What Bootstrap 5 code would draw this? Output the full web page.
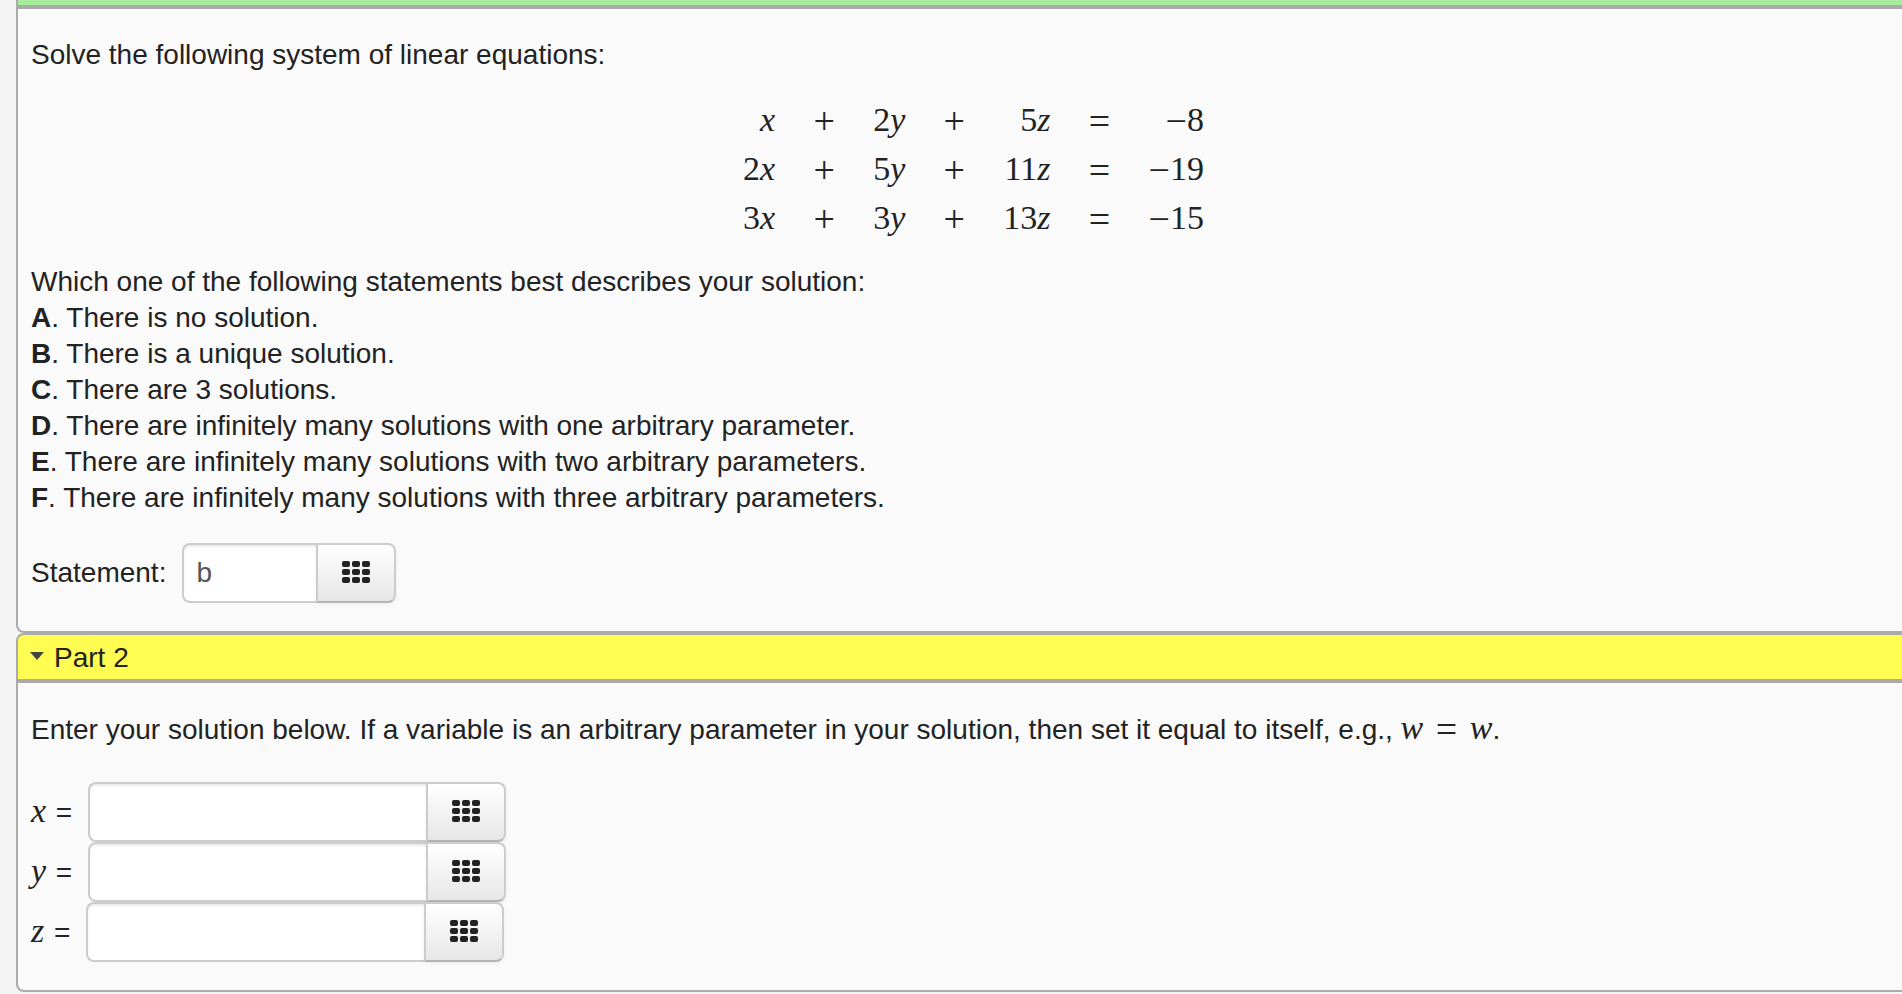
<!DOCTYPE html>
<html lang="en">
<head>
<meta charset="utf-8">
<meta name="viewport" content="width=device-width, initial-scale=1">
<title>Linear systems</title>
<link rel="stylesheet" href="https://cdn.jsdelivr.net/npm/bootstrap@5.3.0/dist/css/bootstrap.min.css">
<style>
  body { background: #f4f4f4; color: #222; font: 28px/36px "Liberation Sans", Arial, sans-serif; }
  .part { margin-left: 16px; }
  .part-head { border: 2px solid #aaa; border-right: 0; border-radius: 8px 0 0 0; }
  .part-head button { color: #222; line-height: 42px; padding: 2px 0 0 12px; gap: 10px; }
  .part-done { background: #a5ec9b; height: 7px; border-top: 0; border-radius: 0; }
  .part-open { background: #fffc52; }
  .part-body { background: #fafafa; border: 2px solid #aaa; border-right: 0; border-radius: 0 0 0 8px; padding: 28px 0 28px 13px; }
  .arrow { width: 14px; height: 8px; margin-top: -5px; }
  .system { font: 34px/49px "Liberation Serif", "Times New Roman", serif; margin: 22px auto; text-align: right; }
  .system-wrap { padding-left: 14px; }
  .system td { padding: 0; }
  .system .op { width: 98px; text-align: center; }
  .op span, .sign, .rel { font-size: 38px; line-height: 34px; vertical-align: -3px; }
  .math { font: italic 34px/34px "Liberation Serif", "Times New Roman", serif; }
  .rel { font-style: normal; margin: 0 4px; }
  label .math { margin-right: 2px; }
  .answers { margin-top: 34px; }
  .statement-row { margin-top: 27px; }
  .answer { width: 418px; height: 60px; }
  .answer-short { width: 214px; }
  .answer .form-control { font-size: 28px; color: #555; padding: 0 12px; border: 2px solid #ccc; border-right: 0; border-radius: 8px; box-shadow: inset 0 2px 2px rgba(0,0,0,.075); }
  .pad-btn { width: 80px; border: 2px solid #ccc; border-bottom-color: #b3b3b3; border-radius: 8px; background: linear-gradient(#fff, #e6e6e6); box-shadow: 0 2px 4px rgba(0,0,0,.05); padding: 0 0 2px; }
  .pad-btn svg { width: 28px; height: 22px; fill: #222; display: block; margin: auto; }
</style>
</head>
<body>
<svg class="d-none" aria-hidden="true">
  <symbol id="keys" viewBox="0 0 28 22">
    <rect width="8" height="6" rx="2"/><rect x="10" width="8" height="6" rx="2"/><rect x="20" width="8" height="6" rx="2"/>
    <rect y="8" width="8" height="6" rx="2"/><rect x="10" y="8" width="8" height="6" rx="2"/><rect x="20" y="8" width="8" height="6" rx="2"/>
    <rect y="16" width="8" height="6" rx="2"/><rect x="10" y="16" width="8" height="6" rx="2"/><rect x="20" y="16" width="8" height="6" rx="2"/>
  </symbol>
</svg>
<main>
  <section class="part">
    <div class="part-head part-done"></div>
    <div class="part-body">
      <p class="m-0">Solve the following system of linear equations:</p>
      <div class="system-wrap">
        <table class="system">
          <tr><td><i>x</i></td><td class="op"><span>+</span></td><td>2<i>y</i></td><td class="op"><span>+</span></td><td>5<i>z</i></td><td class="op"><span>=</span></td><td><span class="sign">−</span>8</td></tr>
          <tr><td>2<i>x</i></td><td class="op"><span>+</span></td><td>5<i>y</i></td><td class="op"><span>+</span></td><td>11<i>z</i></td><td class="op"><span>=</span></td><td><span class="sign">−</span>19</td></tr>
          <tr><td>3<i>x</i></td><td class="op"><span>+</span></td><td>3<i>y</i></td><td class="op"><span>+</span></td><td>13<i>z</i></td><td class="op"><span>=</span></td><td><span class="sign">−</span>15</td></tr>
        </table>
      </div>
      <p class="m-0">Which one of the following statements best describes your solution:</p>
      <ul class="list-unstyled m-0">
        <li><b>A</b>. There is no solution.</li>
        <li><b>B</b>. There is a unique solution.</li>
        <li><b>C</b>. There are 3 solutions.</li>
        <li><b>D</b>. There are infinitely many solutions with one arbitrary parameter.</li>
        <li><b>E</b>. There are infinitely many solutions with two arbitrary parameters.</li>
        <li><b>F</b>. There are infinitely many solutions with three arbitrary parameters.</li>
      </ul>
      <div class="statement-row d-flex align-items-center gap-3">
        <label for="statement">Statement:</label>
        <div class="input-group answer answer-short">
          <input id="statement" type="text" class="form-control" value="b">
          <button type="button" class="btn pad-btn" aria-label="Open keypad"><svg><use href="#keys"/></svg></button>
        </div>
      </div>
    </div>
  </section>
  <section class="part">
    <div class="part-head part-open">
      <button type="button" class="d-flex align-items-center w-100 border-0 bg-transparent">
        <svg class="arrow" viewBox="0 0 14 8"><path d="M0 0h14L7 8z" fill="#444"/></svg>Part 2
      </button>
    </div>
    <div class="part-body">
      <p class="m-0">Enter your solution below. If a variable is an arbitrary parameter in your solution, then set it equal to itself, e.g., <span class="math">w <span class="rel">=</span> w</span>.</p>
      <div class="answers">
        <div class="d-flex align-items-center gap-3">
          <label for="ans-x"><span class="math">x</span> =</label>
          <div class="input-group answer">
            <input id="ans-x" type="text" class="form-control">
            <button type="button" class="btn pad-btn" aria-label="Open keypad"><svg><use href="#keys"/></svg></button>
          </div>
        </div>
        <div class="d-flex align-items-center gap-3">
          <label for="ans-y"><span class="math">y</span> =</label>
          <div class="input-group answer">
            <input id="ans-y" type="text" class="form-control">
            <button type="button" class="btn pad-btn" aria-label="Open keypad"><svg><use href="#keys"/></svg></button>
          </div>
        </div>
        <div class="d-flex align-items-center gap-3">
          <label for="ans-z"><span class="math">z</span> =</label>
          <div class="input-group answer">
            <input id="ans-z" type="text" class="form-control">
            <button type="button" class="btn pad-btn" aria-label="Open keypad"><svg><use href="#keys"/></svg></button>
          </div>
        </div>
      </div>
    </div>
  </section>
</main>
<script src="https://cdn.jsdelivr.net/npm/bootstrap@5.3.0/dist/js/bootstrap.bundle.min.js"></script>
</body>
</html>
